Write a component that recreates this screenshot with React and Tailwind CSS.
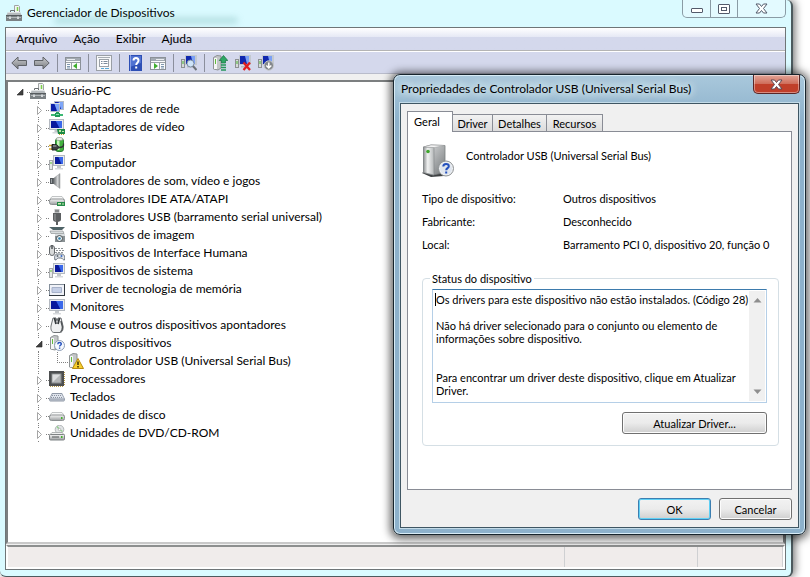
const UI = "font-['Lato','Open_Sans',sans-serif]";

/* ---------- icons ---------- */
function Icon({ children, size = 16, className = "" }) {
  return (
    <svg width={size} height={size} viewBox={`0 0 ${size} ${size}`} className={`shrink-0 ${className}`} aria-hidden="true">
      <defs>
        <linearGradient id="metal" x1="0" y1="0" x2="0" y2="1">
          <stop offset="0" stopColor="#f6f6f6" />
          <stop offset="1" stopColor="#9c9fa1" />
        </linearGradient>
        <linearGradient id="metalH" x1="0" y1="0" x2="1" y2="0">
          <stop offset="0" stopColor="#6c7073" />
          <stop offset="0.6" stopColor="#d4d6d7" />
          <stop offset="1" stopColor="#8d9092" />
        </linearGradient>
        <linearGradient id="arrow" x1="0" y1="0" x2="0" y2="1">
          <stop offset="0" stopColor="#c9cacc" />
          <stop offset="0.5" stopColor="#a3a5a8" />
          <stop offset="1" stopColor="#77797d" />
        </linearGradient>
      </defs>
      {children}
    </svg>
  );
}

const PcIcon = () => (
  <Icon>
    <path d="M8.500 .5h4l1 1v7h-5z" fill="#f3f5f4" stroke="#a0a4a4" />
    <path d="M11.500 2v4" stroke="#7ed04a" strokeWidth="1.500" />
    <path d="M4.500 7.500v-2h4v2" fill="none" stroke="#6a6f72" />
    <path d="M2 7h12l2 4H0z" fill="#b5babd" />
    <path d="M2 7.500h12" stroke="#dfe2e3" />
    <path d="M0 10h16v6H0z" fill="#7b8184" />
    <path d="M0 10.500h16" stroke="#565b5e" />
    <path d="M1 12.500h14" stroke="#b3b8ba" />
    <path d="M3 11.500h2V14H3zM11 11.500h2V14h-2z" fill="#d4d8da" />
  </Icon>
);
const BlueScreen = ({ x, y, w, h }) => (
  <>
    <rect x={x} y={y} width={w} height={h} fill="#b3bac6" />
    <rect x={x + 1} y={y + 1} width={w - 2} height={h - 2} fill="#0b1fa8" />
    <path d={`M${x + w * 0.45} ${y + 1}H${x + w - 1}V${y + h - 1}H${x + w * 0.7}z`} fill="#7ea6f8" />
  </>
);
const NetworkIcon = () => (
  <Icon>
    <BlueScreen x={5} y={0} w={10} h={9} />
    <BlueScreen x={1} y={2} w={10} h={9} />
    <path d="M1 2.500h10M1.500 2v9" stroke="#d5dbe6" />
    <path d="M7 11h3v2H7z" fill="#2ba060" />
    <path d="M2 13h12v2H2z" fill="#3bb873" />
    <path d="M6 12h5v4H6z" fill="#1f9a58" />
    <path d="M7 13h3v1H7z" fill="#8ee3b0" />
  </Icon>
);
const Monitor = ({ x = 1, y = 1, w = 13, h = 10 }) => (
  <>
    <rect x={x + 0.5} y={y + 0.5} width={w - 1} height={h - 1} fill="#e8ebee" stroke="#b4b9c0" />
    <rect x={x + 2} y={y + 2} width={w - 4} height={h - 4} fill="#0a1a9c" />
    <path d={`M${x + w * 0.45} ${y + 2}H${x + w - 2}V${y + h - 2}H${x + w * 0.7}z`} fill="#3a68ea" />
    <path d={`M${x + w * 0.5 - 2} ${y + h}h4v2h-4z`} fill="#c3c7cb" />
    <path d={`M${x + w * 0.5 - 4} ${y + h + 2}h8v1.500h-8z`} fill="#d6d9dc" />
  </>
);
const VideoIcon = () => (
  <Icon>
    <Monitor x={0} y={0} w={15} h={11} />
    <path d="M8 10h8v5H9z" fill="#1d8a45" />
    <path d="M10 11h2v2h-2zM13 12h2v1h-2z" fill="#bfe6a4" />
    <path d="M10 15h1v1h-1zM12 15h1v1h-1zM14 15h1v1h-1z" fill="#c9a227" />
  </Icon>
);
const BatteryIcon = () => (
  <Icon>
    <rect x="6.500" y="1.500" width="8" height="13" rx="2.500" fill="#43b23f" stroke="#2a7d34" />
    <path d="M8 3h2.500v10H8z" fill="#c6f3ba" />
    <ellipse cx="10.500" cy="2" rx="3.500" ry="1.500" fill="#eef3ec" stroke="#6f7f6e" strokeWidth=".6" />
    <path d="M0 8.500h3M0 12h3" stroke="#d3a62b" strokeWidth="1.500" />
    <path d="M3 7.500h2.500c2.500 0 4 1.200 4 2.800s-1.500 2.700-4 2.700H3z" fill="#3c3f41" stroke="#1e2021" />
    <path d="M9.500 10.500c4 0 5.500-1 5-4" fill="none" stroke="#303335" strokeWidth="1.300" />
    <path d="M4 9h3.500" stroke="#b0b4b6" />
  </Icon>
);
const ComputerIcon = () => (
  <Icon>
    <rect x=".5" y="5.500" width="3" height="9" fill="#e6e8e8" stroke="#a7aaac" />
    <path d="M1.500 7h1v2h-1z" fill="#5bbf35" />
    <Monitor x={4} y={0} w={12} h={11} />
  </Icon>
);
const SpeakerIcon = () => (
  <Icon>
    <path d="M1 5h4v6H1z" fill="#53585c" />
    <path d="M5 5l6-4.500v15L5 11z" fill="url(#metalH)" stroke="#94989b" strokeWidth=".5" />
    <path d="M2.500 6v4" stroke="#9aa0a4" />
  </Icon>
);
const DriveIcon = ({ ide = false }) => (
  <Icon>
    <path d="M3 5.500h10l2.500 3.500H.5z" fill="#f7f8f8" stroke="#b4b7b9" strokeWidth=".8" />
    <rect x=".5" y="8" width="15" height="5.500" rx="2" fill="url(#metal)" stroke="#8d9193" />
    {ide ? (
      <>
        <path d="M8 11h8v4H8z" fill="#248b49" />
        <path d="M9 12h3v1.500H9zM13 12.500h2v1h-2z" fill="#d3ecb8" />
      </>
    ) : (
      <path d="M12 10h1.500v2H12z" fill="#44b12c" />
    )}
  </Icon>
);
const UsbIcon = () => (
  <Icon>
    <path d="M5.500 0h5v4h-5z" fill="#b9bbbc" />
    <path d="M6.500 1h1v2h-1zM8.500 1h1v2h-1z" fill="#55585a" />
    <path d="M4 4h8v6.500c0 1.500-1.500 2-3 2.500v3H7v-3c-1.500-.5-3-1-3-2.500z" fill="#5c5f61" />
    <path d="M5.500 5v6M6.500 5v7" stroke="#7d8082" />
  </Icon>
);
const ImagingIcon = () => (
  <Icon>
    <path d="M0 0h16l-3 3H4z" fill="#4f6367" />
    <path d="M1 4h13l1 2.500H2z" fill="#d8dcdd" stroke="#7f8486" strokeWidth=".6" />
    <path d="M6 7h10v8H6z" fill="#8b9295" />
    <path d="M6 7h10v2H6z" fill="#d9dddf" />
    <circle cx="10.500" cy="11.500" r="3" fill="#eef1f2" stroke="#4b5356" />
    <circle cx="10.500" cy="11.500" r="1.300" fill="#2f7ea8" />
  </Icon>
);
const HidIcon = () => (
  <Icon>
    <rect x=".5" y=".5" width="5" height="10" rx="2.500" fill="#d8dada" stroke="#65696c" />
    <path d="M3 0v4" stroke="#4f5356" strokeWidth="1.500" />
    <path d="M6 3.500h9M7 5.500h9M6 7.500h9" stroke="#8f9497" strokeDasharray="2 1" />
    <path d="M6 15c-1-3 0-6 2-6h5c2 0 3.500 3 2.500 6-2 0-2-2-3.500-2H9.500C8 13 8 15 6 15z" fill="#dfe3e8" stroke="#5c6773" strokeWidth=".9" />
    <circle cx="12.500" cy="11" r="1" fill="#3667c4" />
    <circle cx="8.500" cy="11" r="1" fill="#60686f" />
  </Icon>
);
const MemoryIcon = () => (
  <Icon>
    <rect x=".5" y="3.500" width="15" height="11" fill="#f0f2f8" stroke="#85909c" />
    <path d="M15.500 3v12M0 14.500h16" stroke="#333a41" />
    <path d="M3 6.500h9.500v5H3z" fill="#c5cfe6" stroke="#a7b2ca" />
  </Icon>
);
const MonitorIcon = () => (
  <Icon>
    <Monitor x={0} y={0} w={16} h={12} />
  </Icon>
);
const MouseIcon = () => (
  <Icon>
    <path d="M4 1h3l1 3 1-3h3l2 8c.5 4-1 6.500-3 6.500H5C3 15.500 1.500 13 2 9z" fill="#eff0f1" stroke="#6d7174" />
    <path d="M5.500 1L7 7M10.500 1L9 7" stroke="#35393c" strokeWidth="1.800" />
    <path d="M12 4l1.500 6c0 3-.5 4-2 5" fill="none" stroke="#505457" strokeWidth="1.500" />
  </Icon>
);
const Tower = () => (
  <>
    <path d="M1.500 2.500L5 .5l4 .5v12l-3 2-4.500-1z" fill="#c3c6c7" stroke="#8e9294" />
    <path d="M2 3h3v11H2z" fill="#f4f5f5" />
    <path d="M3.500 4v5" stroke="#62bd3d" />
  </>
);
const UnknownIcon = () => (
  <Icon>
    <Tower />
    <circle cx="10.500" cy="10.500" r="5" fill="#f6f9fe" stroke="#8d9db5" />
    <path d="M8.800 9.200c0-2.300 3.500-2.200 3.500-.2 0 1.300-1.700 1.200-1.700 2.500M10.600 12.500v1.300" fill="none" stroke="#2450bd" strokeWidth="1.400" />
  </Icon>
);
const WarnIcon = () => (
  <Icon>
    <Tower />
    <path d="M10 5.500l5.500 10h-11z" fill="#f7cf2d" stroke="#b98b0e" strokeLinejoin="round" />
    <path d="M10 8.500v3.500M10 13v1.500" stroke="#3c2f05" strokeWidth="1.500" />
  </Icon>
);
const CpuIcon = () => (
  <Icon>
    <path d="M1 15.500h14M15.500 1v14" stroke="#b99a49" strokeDasharray="1 1" />
    <rect x="0" y="0" width="15" height="15" fill="#4d4f50" />
    <rect x="3" y="3" width="9" height="9" fill="#b4b6b7" stroke="#8c8f90" />
    <path d="M3.500 3.500h8l-8 8z" fill="#dcddde" />
  </Icon>
);
const KeyboardIcon = () => (
  <Icon>
    <path d="M3 4h10l3 6c0 2-1 2.500-2 2.500H2c-1 0-2-.5-2-2.500z" fill="#8f98a6" />
    <path d="M3.500 5h9l2.500 4.500H1z" fill="#dfe4ec" />
    <path d="M3 6.500h10M2 8.500h12" stroke="#8b93a1" strokeDasharray="1 1" />
    <path d="M1 11h14" stroke="#c6ccd6" />
  </Icon>
);
const DvdIcon = () => (
  <Icon>
    <circle cx="10.500" cy="4.500" r="4.300" fill="#e1e4e6" stroke="#a3a8aa" strokeWidth=".8" />
    <path d="M10.500 4.500L8 1.500M10.500 4.500l3 2" stroke="#8fcf8a" strokeWidth="1.300" />
    <circle cx="10.500" cy="4.500" r="1.200" fill="#fff" stroke="#999" strokeWidth=".6" />
    <path d="M3 7.500h10l2.500 2.500H.5z" fill="#f0f1f1" stroke="#a0a3a5" strokeWidth=".8" />
    <rect x=".5" y="9.500" width="15" height="5.500" rx="1" fill="url(#metal)" stroke="#7f8385" />
    <path d="M3 12h7" stroke="#55595b" />
    <path d="M12 11h1.500v2H12z" fill="#44b12c" />
  </Icon>
);

/* toolbar icons */
const ArrowIcon = ({ flip }) => (
  <Icon className={flip ? "-scale-x-100" : ""}>
    <path d="M.8 8L7 2v3.500h8.500v5H7V14z" fill="url(#arrow)" stroke="#606368" strokeLinejoin="round" />
  </Icon>
);
const PaneIcon = ({ right }) => (
  <Icon className={right ? "-scale-x-100" : ""}>
    <rect x=".5" y="2.500" width="15" height="12" fill="#fafbfc" stroke="#8b9198" />
    <path d="M1 3h14v3H1z" fill="#a2a9b2" />
    <path d="M2 4.500h8" stroke="#e9ecef" />
    <path d="M6.500 7v7M1 7.500h14" stroke="#9ba1a8" />
    <path d="M2 9.500h3M2 11.500h3M2 13h3" stroke="#7f97b0" />
    <path d="M12 8v6l-4-3z" fill="#3fae2d" />
  </Icon>
);
const PropsIcon = () => (
  <Icon>
    <rect x=".5" y=".5" width="15" height="15" fill="#f6f7f9" stroke="#9a9fa6" />
    <path d="M2 2.500h12" stroke="#a7adb4" />
    <rect x="3.500" y="4.500" width="9" height="7" fill="#fff" stroke="#9ba1a8" />
    <path d="M5 6.500h1.500M7.500 6.500h4M5 8.500h1.500M7.500 8.500h4" stroke="#7c8b9c" />
    <path d="M5 13.500h3M9 13.500h4" stroke="#58a8d8" />
  </Icon>
);
const HelpIcon = () => (
  <Icon>
    <rect x="2" y="0" width="13" height="16" fill="#2d4fb5" />
    <path d="M3 1h11v7L3 12z" fill="#4f72d2" />
    <path d="M3.500 0v16" stroke="#8aa0e4" />
    <path d="M6.500 5.500c0-3.500 5-3.500 5 0 0 2.500-2.300 2-2.300 4.500M9.200 11.500v2" fill="none" stroke="#fff" strokeWidth="2" />
  </Icon>
);
const SmallPc = () => (
  <>
    <rect x=".5" y="4.500" width="3" height="8" fill="#d6d9da" stroke="#8d9193" />
    <path d="M1.500 6h1v3h-1z" fill="#48b530" />
    <rect x="4" y="0" width="12" height="10" fill="#c3c9d0" />
    <path d="M5 1h9v8H5z" fill="#1027ae" />
    <path d="M10 1h4v8h-2z" fill="#7ba0f5" />
    <path d="M6 11h7v1.500H6z" fill="#b7bbc0" />
  </>
);
const ScanIcon = () => (
  <Icon>
    <SmallPc />
    <circle cx="9.500" cy="8.500" r="3.500" fill="#cfe4f8" stroke="#7c8da4" />
    <path d="M12 11l3.500 4" stroke="#6c7278" strokeWidth="2" />
  </Icon>
);
const UpdateIcon = () => (
  <Icon>
    <Tower />
    <path d="M11.500 .5l4.300 5h-2.300V8h-4V5.500H7.200z" fill="#2fa866" stroke="#15713f" strokeWidth=".7" />
    <path d="M9 10h5M9 12.500h5M9 15h5" stroke="#25955a" strokeWidth="1.500" />
  </Icon>
);
const UninstallIcon = () => (
  <Icon>
    <SmallPc />
    <path d="M8.500 7.500l6.500 7.500M15 7.500L8.500 15" stroke="#df1f1f" strokeWidth="2.300" />
  </Icon>
);
const DisableIcon = () => (
  <Icon>
    <SmallPc />
    <circle cx="10.800" cy="10.500" r="4.700" fill="#83878b" stroke="#c5c8cb" />
    <path d="M10.800 7.500v5.500M8.300 10.500l2.500 2.500 2.500-2.500" fill="none" stroke="#fff" strokeWidth="1.500" />
  </Icon>
);

const CloseGlyph = ({ light }) => (
  <svg width="13" height="11" viewBox="0 0 13 11" aria-hidden="true">
    <path
      d="M1 1h3.500l2 2.500L8.500 1H12L8.500 5.500 12 10H8.500l-2-2.500-2 2.500H1l3.500-4.500z"
      fill="#fff"
      stroke={light ? "#5b4a54" : "#535a6b"}
    />
  </svg>
);

/* ---------- tree ---------- */
const devices = [
  { label: "Adaptadores de rede", icon: NetworkIcon },
  { label: "Adaptadores de vídeo", icon: VideoIcon },
  { label: "Baterias", icon: BatteryIcon },
  { label: "Computador", icon: ComputerIcon },
  { label: "Controladores de som, vídeo e jogos", icon: SpeakerIcon },
  { label: "Controladores IDE ATA/ATAPI", icon: () => <DriveIcon ide /> },
  { label: "Controladores USB (barramento serial universal)", icon: UsbIcon },
  { label: "Dispositivos de imagem", icon: ImagingIcon },
  { label: "Dispositivos de Interface Humana", icon: HidIcon },
  { label: "Dispositivos de sistema", icon: ComputerIcon },
  { label: "Driver de tecnologia de memória", icon: MemoryIcon },
  { label: "Monitores", icon: MonitorIcon },
  { label: "Mouse e outros dispositivos apontadores", icon: MouseIcon },
  { label: "Outros dispositivos", icon: UnknownIcon, child: "Controlador USB (Universal Serial Bus)" },
  { label: "Processadores", icon: CpuIcon },
  { label: "Teclados", icon: KeyboardIcon },
  { label: "Unidades de disco", icon: DriveIcon },
  { label: "Unidades de DVD/CD-ROM", icon: DvdIcon },
];

function Twisty({ open, root }) {
  return (
    <svg width="20" height="18" viewBox="0 0 20 18" className="shrink-0" aria-hidden="true">
      {!root && <path d="M9.500 1v4M9.500 17v1" stroke="#808080" strokeDasharray="1 1" />}
      <path d="M17 10.500h3" stroke="#808080" strokeDasharray="1 1" />
      {open ? (
        <path d="M13 7v6H7z" fill="#404040" stroke="#262626" strokeWidth=".6" />
      ) : (
        <path d="M8.500 6.500v8l4-4z" fill="#fff" stroke="#a6a6a6" />
      )}
    </svg>
  );
}

function Row({ item, open, root }) {
  const I = item.icon;
  return (
    <div className="flex h-[18px] items-center">
      <Twisty open={open} root={root} />
      <I />
      <span className="ml-[5px] whitespace-nowrap">{item.label}</span>
    </div>
  );
}

function DeviceTree() {
  return (
    <ul className="pl-[2px] text-[12px] leading-[18px] text-black">
      <li>
        <Row item={{ label: "Usuário-PC", icon: PcIcon }} open root />
        <ul className="pl-[19px]">
          {devices.map((d) => (
            <li key={d.label}>
              <Row item={d} open={!!d.child} />
              {d.child && (
                <div className="flex h-[18px] items-center">
                  <svg width="39" height="18" viewBox="0 0 39 18" className="shrink-0" aria-hidden="true">
                    <path d="M9.500 0v18M28.500 0v10M28 10.500h11" fill="none" stroke="#808080" strokeDasharray="1 1" />
                  </svg>
                  <WarnIcon />
                  <span className="ml-[5px] whitespace-nowrap">{d.child}</span>
                </div>
              )}
            </li>
          ))}
        </ul>
      </li>
    </ul>
  );
}

/* ---------- main window ---------- */
const Sep = () => <span className="h-[18px] w-px bg-[#8b8f9c]" />;
const Tool = ({ label, children }) => (
  <button type="button" aria-label={label} className="flex h-[18px] w-4 items-center justify-center">
    {children}
  </button>
);

function MainWindow() {
  return (
    <main className="relative mr-[17px] flex min-h-screen flex-col rounded-r-[6px] rounded-bl-[6px] border-b border-r-2 border-[#4c5a5e] bg-[#dafaff] px-[5px] pb-[6px] shadow-[2px_0_8px_rgba(0,0,0,0.55)]">
      <header className="flex h-[27px] items-start justify-between">
        <div className="flex h-[26px] items-center gap-[5px] pl-px">
          <PcIcon />
          <h1 className="text-[12px] text-black">Gerenciador de Dispositivos</h1>
        </div>
        <div className="flex h-[18px] overflow-hidden rounded-b-[5px] border border-t-0 border-[#8a9ba5] bg-[#e3faff]">
          <button type="button" aria-label="Minimizar" className="flex w-[28px] items-center justify-center border-r border-[#8a9ba5]">
            <span className="mt-[3px] h-[5px] w-[12px] rounded-[1px] border border-[#535a6b] bg-white" />
          </button>
          <button type="button" aria-label="Maximizar" className="flex w-[27px] items-center justify-center border-r border-[#8a9ba5]">
            <span className="flex h-[10px] w-[12px] items-center justify-center rounded-[1px] border border-[#535a6b] bg-white">
              <span className="h-[4px] w-[6px] border border-[#535a6b]" />
            </span>
          </button>
          <button type="button" aria-label="Fechar" className="flex w-[47px] items-center justify-center">
            <CloseGlyph />
          </button>
        </div>
      </header>
      <div aria-hidden="true" className="absolute left-[54px] top-[17px] h-[7px] w-[184px] rounded-full bg-[#4f9a92]/25 blur-[3px]" />

      <div className="relative flex grow flex-col border border-[#6f7577] bg-[#f0f0f0]">
        <nav className="flex h-[23px] items-center gap-[16px] border-b border-[#b4b4b4] bg-linear-to-b from-white from-0% via-[#e6e9f5] via-40% to-[#d4d8ec] to-41% pl-[10px] text-[12px] text-black">
          <button type="button">Arquivo</button>
          <button type="button">Ação</button>
          <button type="button">Exibir</button>
          <button type="button">Ajuda</button>
        </nav>
        <div className="flex h-[23px] items-center gap-[7px] border-t border-b border-t-white border-b-[#b9bccb] bg-[#d4d8ec] pl-[5px]">
          <Tool label="Voltar"><ArrowIcon /></Tool>
          <Tool label="Avançar"><ArrowIcon flip /></Tool>
          <Sep />
          <Tool label="Mostrar árvore"><PaneIcon /></Tool>
          <Sep />
          <Tool label="Propriedades"><PropsIcon /></Tool>
          <Sep />
          <Tool label="Ajuda"><HelpIcon /></Tool>
          <Tool label="Mostrar painel de ações"><PaneIcon right /></Tool>
          <Sep />
          <Tool label="Verificar alterações"><ScanIcon /></Tool>
          <Sep />
          <Tool label="Atualizar driver"><UpdateIcon /></Tool>
          <Tool label="Desinstalar"><UninstallIcon /></Tool>
          <Tool label="Desativar"><DisableIcon /></Tool>
        </div>
        <section className="mt-[6px] grow border-2 border-[#7c7f80] border-b-[#c9c9c9] bg-white">
          <DeviceTree />
        </section>
        <footer className="mt-[1px] flex h-[24px] border-2 border-t-2 border-white border-t-[#8d8f8f] bg-[#f0eceb]">
          <span className="grow" />
          <span className="w-[133px] border-l border-[#cfd0d2]" />
          <span className="w-[86px] border-l border-r border-[#cfd0d2]" />
        </footer>
      </div>
    </main>
  );
}

/* ---------- dialog ---------- */
const btn =
  "h-[22px] rounded-[3px] border border-[#707070] bg-linear-to-b from-[#f2f2f2] from-0% via-[#ebebeb] via-50% to-[#cfcfcf] to-100% shadow-[inset_0_0_0_1px_#fcfcfc] text-center";

const fields = [
  ["Tipo de dispositivo:", "Outros dispositivos"],
  ["Fabricante:", "Desconhecido"],
  ["Local:", "Barramento PCI 0, dispositivo 20, função 0"],
];

const status = `Os drivers para este dispositivo não estão instalados. (Código 28)

Não há driver selecionado para o conjunto ou elemento de
informações sobre dispositivo.


Para encontrar um driver deste dispositivo, clique em Atualizar
Driver.`;

function TowerLarge() {
  return (
    <svg width="33" height="34" viewBox="0 0 33 34" className="shrink-0" aria-hidden="true">
      <defs>
        <linearGradient id="twf" x1="0" y1="0" x2="1" y2="0">
          <stop offset="0" stopColor="#8e9193" />
          <stop offset=".4" stopColor="#f1f2f2" />
          <stop offset="1" stopColor="#b4b7b8" />
        </linearGradient>
        <linearGradient id="tws" x1="0" y1="0" x2="1" y2="1">
          <stop offset="0" stopColor="#e2e3e4" />
          <stop offset="1" stopColor="#74787a" />
        </linearGradient>
      </defs>
      <path d="M0 29l3-2 19 2v3l-13 1z" fill="#3e4143" />
      <path d="M1.500 3L9 1l14 .5v27L11 31l-9.500-2.500z" fill="url(#tws)" stroke="#7a7d7f" strokeWidth=".8" />
      <path d="M1.500 3L12 3.500V31L1.500 28.500z" fill="url(#twf)" stroke="#808486" strokeWidth=".6" />
      <path d="M1.500 3L9 1l14 .5L12 3.500z" fill="#f6f6f6" stroke="#97999b" strokeWidth=".5" />
      <circle cx="6" cy="7.500" r="1.800" fill="#3fa72d" />
      <circle cx="24" cy="24.500" r="7.500" fill="#eef0f2" stroke="#8d9194" />
      <circle cx="24" cy="24.500" r="6" fill="#dfe5ee" />
      <path d="M21.300 22.500c0-3.600 5.500-3.300 5.500-.3 0 2-2.600 1.900-2.600 4M24.200 27.500v2" fill="none" stroke="#2450bd" strokeWidth="2" />
    </svg>
  );
}

function ScrollGlyph({ down }) {
  return (
    <svg width="9" height="5" viewBox="0 0 9 5" className={down ? "rotate-180" : ""} aria-hidden="true">
      <path d="M4.500 0L8.500 4.500h-8z" fill="#8e8e8e" />
    </svg>
  );
}

function Dialog() {
  return (
    <div
      role="dialog"
      aria-labelledby="dlg-title"
      className="absolute right-[4px] top-[74px] w-[413px] rounded-[7px] border border-[#17242c] bg-linear-to-b from-[#a9c8dc] from-0% to-[#8db1cb] to-10% p-[6px] pt-0 text-[11px] leading-[13px] text-black shadow-[inset_0_0_0_1px_#d8ecf6,0_1px_9px_3px_rgba(0,0,0,0.6)]"
    >
      <div className="-mr-px flex h-[28px] items-start justify-between pl-px">
        <h2
          id="dlg-title"
          className="text-[12px] leading-[28px] whitespace-nowrap [text-shadow:0_0_8px_#e4f4fc,0_0_8px_#e4f4fc,0_0_12px_#e4f4fc]"
        >
          Propriedades de Controlador USB (Universal Serial Bus)
        </h2>
        <button
          type="button"
          aria-label="Fechar"
          className="flex h-[19px] w-[47px] items-center justify-center rounded-b-[5px] border border-t-0 border-[#5a2626] bg-linear-to-b from-[#e2a497] from-0% via-[#cf6e5c] via-48% to-[#c03f2a] to-52% shadow-[inset_0_0_0_1px_rgba(255,255,255,0.4)]"
        >
          <CloseGlyph light />
        </button>
      </div>
      <div className="border border-[#3f5663] bg-[#f0f0f0] px-[6px] pt-[7px] pb-[7px] shadow-[0_0_0_1px_#c3dbe8]">
        <div role="tablist" className="flex items-end">
          <button role="tab" aria-selected="true" type="button" className="relative -mb-px h-[21px] w-[46px] border border-b-0 border-[#898c95] bg-white pr-[6px] pb-[2px]">
            Geral
          </button>
          {[["Driver", "w-[40px]"], ["Detalhes", "w-[54px]"], ["Recursos", "w-[56px]"]].map(([t, w]) => (
            <button
              key={t}
              role="tab"
              aria-selected="false"
              type="button"
              className={`${w} h-[17px] border border-b-0 border-l-0 border-[#898c95] bg-linear-to-b from-[#f2f2f2] to-[#dcdcdc]`}
            >
              {t}
            </button>
          ))}
        </div>
        <div className="border border-[#898c95] bg-white pt-[12px] pr-[12px] pb-[43px] pl-[14px]">
          <div className="flex items-start gap-[11px]">
            <TowerLarge />
            <p className="mt-[5px]">Controlador USB (Universal Serial Bus)</p>
          </div>
          <dl className="mt-[14px] grid grid-cols-[141px_1fr] gap-y-[10px]">
            {fields.map(([k, v]) => (
              <div key={k} className="contents">
                <dt>{k}</dt>
                <dd className="whitespace-nowrap">{v}</dd>
              </div>
            ))}
          </dl>
          <fieldset className="mt-[21px] rounded-[4px] border border-[#d5dfe5] pr-[11px] pb-[11px] pl-[9px]">
            <legend className="-ml-[2px] px-[2px] leading-[13px]">
              <label htmlFor="status">Status do dispositivo</label>
            </legend>
            <div className="relative mt-[4px] flex h-[114px] border border-[#b5cfe7] border-t-[#3d7bad] p-px">
              <span aria-hidden="true" className="absolute top-[3px] left-[2px] h-[13px] w-px bg-black" />
              <textarea
                id="status"
                readOnly
                defaultValue={status}
                className="min-w-0 grow resize-none overflow-hidden whitespace-pre bg-transparent pt-[2px] pl-[2px] text-[11px] leading-[13px] outline-none"
              />
              <div className="flex w-[16px] flex-col items-center justify-between bg-[#f0f0f0] py-[7px]">
                <button type="button" aria-label="Rolar para cima" className="flex"><ScrollGlyph /></button>
                <button type="button" aria-label="Rolar para baixo" className="flex"><ScrollGlyph down /></button>
              </div>
            </div>
            <div className="mt-[9px] flex justify-end">
              <button type="button" className={`${btn} w-[145px]`}>Atualizar Driver...</button>
            </div>
          </fieldset>
        </div>
        <div className="mt-[8px] flex justify-end gap-[8px]">
          <button type="button" className="h-[22px] w-[73px] rounded-[3px] border border-[#3c7fb1] bg-linear-to-b from-[#f2f2f2] via-[#ebebeb] to-[#cfcfcf] shadow-[inset_0_0_0_1px_#5fd0f5]">
            OK
          </button>
          <button type="button" className={`${btn} w-[73px]`}>Cancelar</button>
        </div>
      </div>
    </div>
  );
}

export default function App() {
  return (
    <div className={`${UI} relative min-h-screen overflow-hidden bg-white`}>
      <MainWindow />
      <Dialog />
    </div>
  );
}
